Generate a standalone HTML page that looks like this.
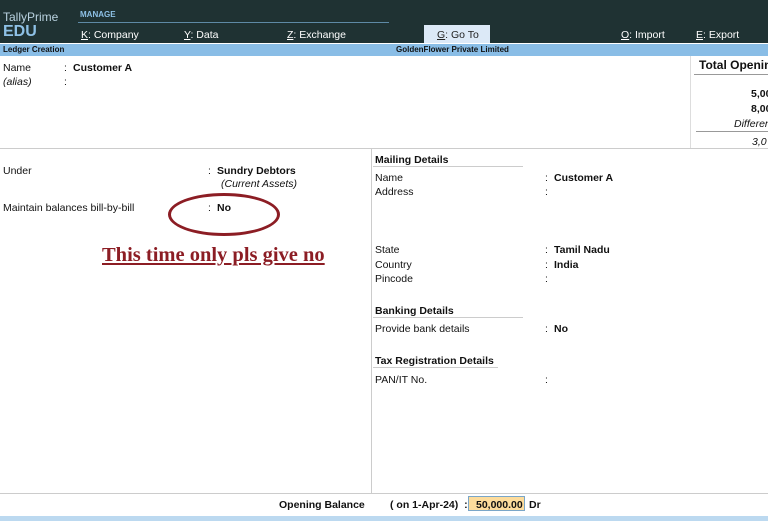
<html><head><style>
body{margin:0;width:768px;height:521px;position:relative;background:#fff;font-family:"Liberation Sans",sans-serif;font-size:10.5px;color:#111;overflow:hidden}
div,span{position:absolute}
.t{margin-top:2px;white-space:nowrap}
.w{color:#fff}
.b{font-weight:bold}
u{text-decoration:underline}
</style></head><body>
<div style="left:0;top:0;width:768px;height:43px;background:#1f3233"></div>
<div class="t" style="left:3px;top:8px;font-size:12px;color:#b9d2e0">TallyPrime</div>
<div class="t b" style="left:3px;top:21px;font-size:16px;color:#8ec1e6">EDU</div>
<div class="t b" style="left:80px;top:8px;font-size:8px;color:#8ec1e6">MANAGE</div>
<div style="left:78px;top:22px;width:311px;height:1px;background:#5e8aa6"></div>
<div class="t w" style="left:81px;top:27px"><u>K</u>: Company</div>
<div class="t w" style="left:184px;top:27px"><u>Y</u>: Data</div>
<div class="t w" style="left:287px;top:27px"><u>Z</u>: Exchange</div>
<div style="left:424px;top:25px;width:66px;height:18px;background:#dce9f7"></div>
<div class="t" style="left:437px;top:27px;color:#222"><u>G</u>: Go To</div>
<div class="t w" style="left:621px;top:27px"><u>O</u>: Import</div>
<div class="t w" style="left:696px;top:27px"><u>E</u>: Export</div>
<div style="left:0;top:44px;width:768px;height:12px;background:#89bde6"></div>
<div class="b" style="left:3px;top:45px;font-size:8px">Ledger Creation</div>
<div class="b" style="left:396px;top:45px;font-size:8px">GoldenFlower Private Limited</div>
<div class="t" style="left:3px;top:60px">Name</div><div class="t" style="left:64px;top:60px">:</div>
<div class="t b" style="left:73px;top:60px">Customer A</div>
<div class="t" style="left:3px;top:74px;font-style:italic">(alias)</div><div class="t" style="left:64px;top:74px">:</div>
<div style="left:690px;top:56px;width:1px;height:92px;background:#ddd"></div>
<div style="left:694px;top:74px;width:74px;height:1px;background:#999"></div>
<div class="t b" style="left:699px;top:56px;font-size:12px">Total Opening</div>
<div class="t b" style="left:751px;top:86px">5,00</div>
<div class="t b" style="left:751px;top:101px">8,00</div>
<div class="t" style="left:734px;top:116px;font-style:italic">Differen</div>
<div style="left:696px;top:131px;width:72px;height:1px;background:#999"></div>
<div class="t" style="left:752px;top:134px;font-style:italic">3,0</div>
<div style="left:0;top:148px;width:768px;height:1px;background:#ccc"></div>
<div style="left:371px;top:149px;width:1px;height:345px;background:#ccc"></div>
<div class="t" style="left:3px;top:163px">Under</div><div class="t" style="left:208px;top:163px">:</div>
<div class="t b" style="left:217px;top:163px">Sundry Debtors</div>
<div class="t" style="left:221px;top:176px;font-style:italic">(Current Assets)</div>
<div class="t" style="left:3px;top:200px">Maintain balances bill-by-bill</div><div class="t" style="left:208px;top:200px">:</div>
<div class="t b" style="left:217px;top:200px">No</div>
<div style="left:168px;top:193px;width:112px;height:43px;border:3px solid #8c1d24;border-radius:50%;box-sizing:border-box"></div>
<div style="left:102px;top:244px;font-family:'Liberation Serif',serif;font-size:20.5px;font-weight:bold;color:#8c1d24;text-decoration:underline;white-space:nowrap">This time only pls give no</div>
<div class="t b" style="left:375px;top:152px">Mailing Details</div>
<div style="left:373px;top:166px;width:150px;height:1px;background:#ccc"></div>
<div class="t" style="left:375px;top:170px">Name</div><div class="t" style="left:545px;top:170px">:</div><div class="t b" style="left:554px;top:170px">Customer A</div>
<div class="t" style="left:375px;top:184px">Address</div><div class="t" style="left:545px;top:184px">:</div>
<div class="t" style="left:375px;top:242px">State</div><div class="t" style="left:545px;top:242px">:</div><div class="t b" style="left:554px;top:242px">Tamil Nadu</div>
<div class="t" style="left:375px;top:257px">Country</div><div class="t" style="left:545px;top:257px">:</div><div class="t b" style="left:554px;top:257px">India</div>
<div class="t" style="left:375px;top:271px">Pincode</div><div class="t" style="left:545px;top:271px">:</div>
<div class="t b" style="left:375px;top:303px">Banking Details</div>
<div style="left:373px;top:317px;width:150px;height:1px;background:#ccc"></div>
<div class="t" style="left:375px;top:321px">Provide bank details</div><div class="t" style="left:545px;top:321px">:</div><div class="t b" style="left:554px;top:321px">No</div>
<div class="t b" style="left:375px;top:353px">Tax Registration Details</div>
<div style="left:373px;top:367px;width:125px;height:1px;background:#ccc"></div>
<div class="t" style="left:375px;top:372px">PAN/IT No.</div><div class="t" style="left:545px;top:372px">:</div>
<div style="left:0;top:493px;width:768px;height:1px;background:#ccc"></div>
<div class="t b" style="left:279px;top:497px">Opening Balance</div>
<div class="t b" style="left:390px;top:497px">( on 1-Apr-24)&nbsp; :</div>
<div style="left:468px;top:496px;width:57px;height:15px;background:#fddc9c;border:1px solid #7aa6c8;box-sizing:border-box"></div>
<div class="t b" style="left:476px;top:497px">50,000.00</div>
<div class="t b" style="left:529px;top:497px">Dr</div>
<div style="left:0;top:516px;width:768px;height:5px;background:#bcd9f0"></div>
</body></html>
